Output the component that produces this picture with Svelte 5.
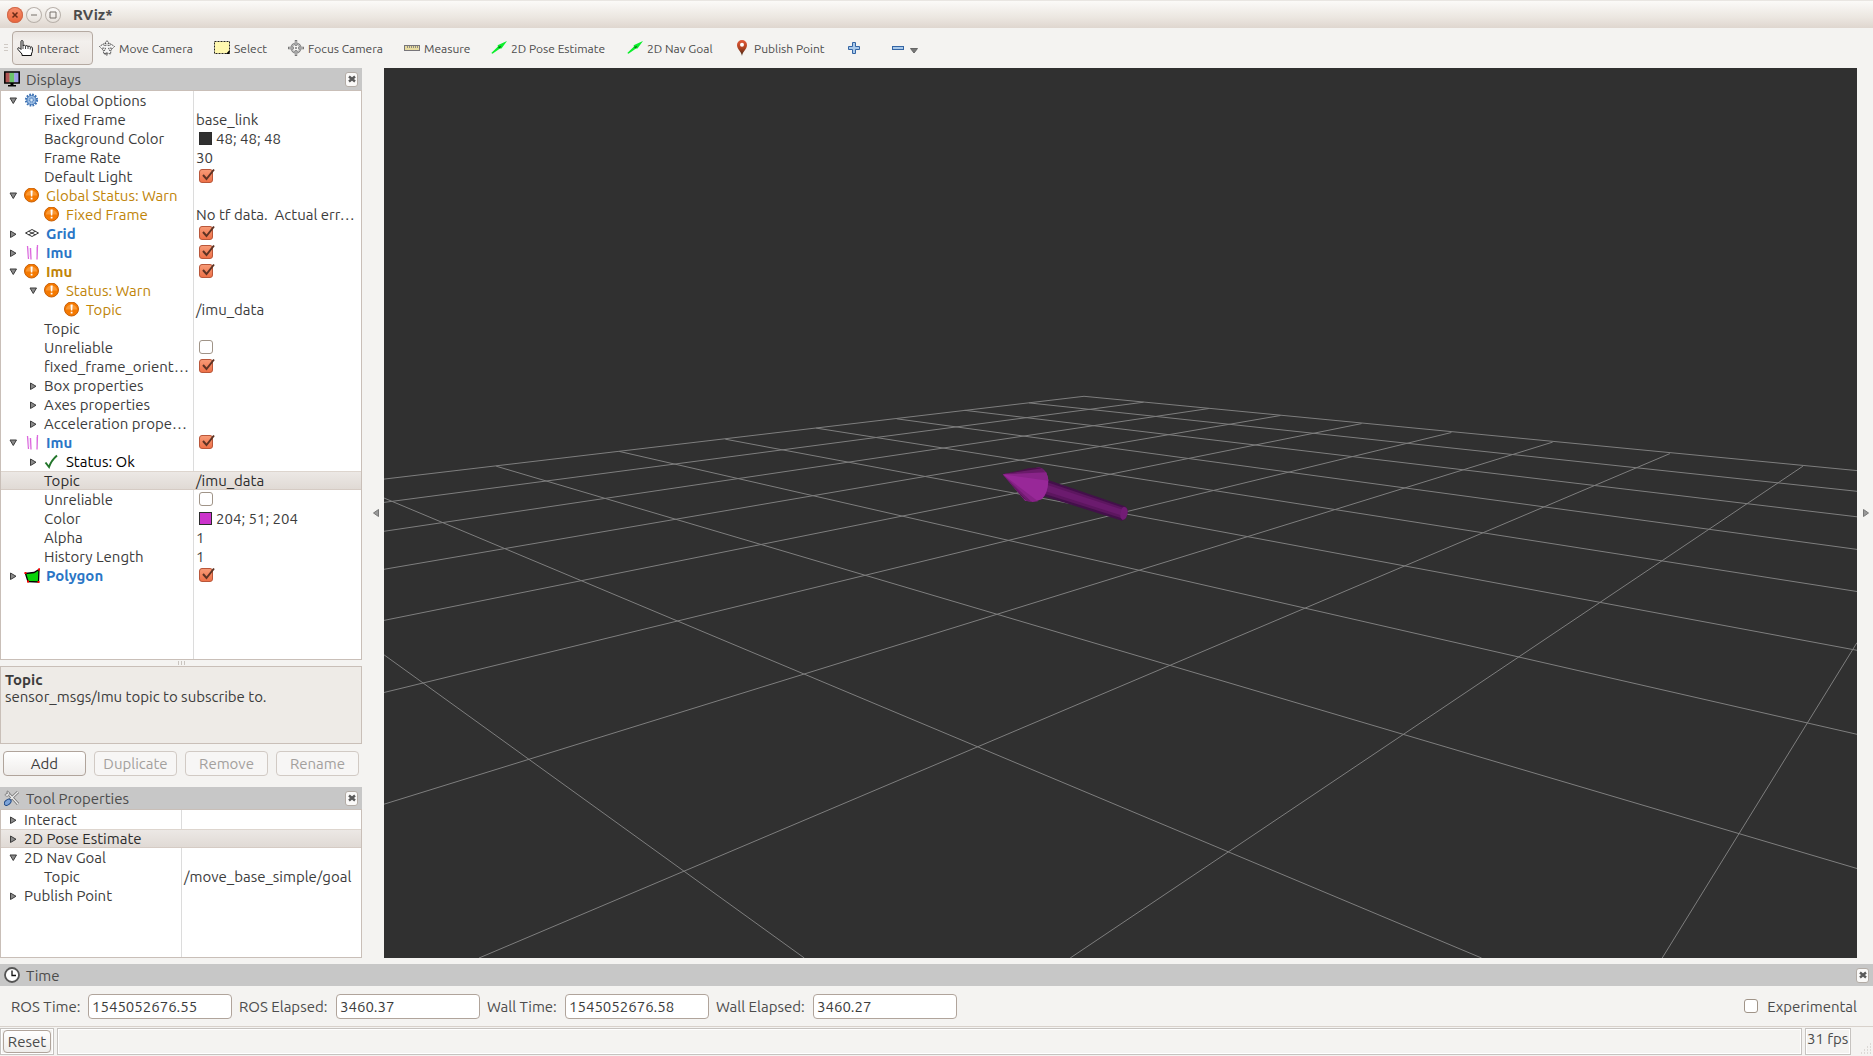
<script lang="ts">
  type Row = {
    name: string;
    level: number;
    open?: boolean;
    icon?: string;
    tone?: string;
    value?: string;
    color?: string;
    check?: boolean;
    selected?: boolean;
  };

  const tools = [
    { label: 'Interact', icon: 'hand' },
    { label: 'Move Camera', icon: 'move' },
    { label: 'Select', icon: 'select' },
    { label: 'Focus Camera', icon: 'focus' },
    { label: 'Measure', icon: 'ruler' },
    { label: '2D Pose Estimate', icon: 'green' },
    { label: '2D Nav Goal', icon: 'green' },
    { label: 'Publish Point', icon: 'pin' },
  ];
  let activeTool = $state('Interact');

  const displays: Row[] = $state([
    { name: 'Global Options', level: 0, open: true, icon: 'gear' },
    { name: 'Fixed Frame', level: 1, value: 'base_link' },
    { name: 'Background Color', level: 1, value: '48; 48; 48', color: '#303030' },
    { name: 'Frame Rate', level: 1, value: '30' },
    { name: 'Default Light', level: 1, check: true },
    { name: 'Global Status: Warn', level: 0, open: true, icon: 'warn', tone: 'warn' },
    { name: 'Fixed Frame', level: 1, icon: 'warn', tone: 'warn', value: 'No tf data.\u00a0 Actual err…' },
    { name: 'Grid', level: 0, open: false, icon: 'grid', tone: 'display', check: true },
    { name: 'Imu', level: 0, open: false, icon: 'imu', tone: 'display', check: true },
    { name: 'Imu', level: 0, open: true, icon: 'warn', tone: 'warn display', check: true },
    { name: 'Status: Warn', level: 1, open: true, icon: 'warn', tone: 'warn' },
    { name: 'Topic', level: 2, icon: 'warn', tone: 'warn', value: '/imu_data' },
    { name: 'Topic', level: 1 },
    { name: 'Unreliable', level: 1, check: false },
    { name: 'fixed_frame_orient…', level: 1, check: true },
    { name: 'Box properties', level: 1, open: false },
    { name: 'Axes properties', level: 1, open: false },
    { name: 'Acceleration prope…', level: 1, open: false },
    { name: 'Imu', level: 0, open: true, icon: 'imu', tone: 'display', check: true },
    { name: 'Status: Ok', level: 1, open: false, icon: 'ok', tone: 'ok' },
    { name: 'Topic', level: 1, value: '/imu_data', selected: true },
    { name: 'Unreliable', level: 1, check: false },
    { name: 'Color', level: 1, value: '204; 51; 204', color: '#cc33cc' },
    { name: 'Alpha', level: 1, value: '1' },
    { name: 'History Length', level: 1, value: '1' },
    { name: 'Polygon', level: 0, open: false, icon: 'polygon', tone: 'display', check: true },
  ]);

  const toolProps: Row[] = $state([
    { name: 'Interact', level: 0, open: false },
    { name: '2D Pose Estimate', level: 0, open: false, selected: true },
    { name: '2D Nav Goal', level: 0, open: true },
    { name: 'Topic', level: 1, value: '/move_base_simple/goal' },
    { name: 'Publish Point', level: 0, open: false },
  ]);

  const times = [
    { id: 'ros-time', label: 'ROS Time:', value: '1545052676.55' },
    { id: 'ros-elapsed', label: 'ROS Elapsed:', value: '3460.37' },
    { id: 'wall-time', label: 'Wall Time:', value: '1545052676.58' },
    { id: 'wall-elapsed', label: 'Wall Elapsed:', value: '3460.27' },
  ];

  // Ground-plane grid after projection: x1, y1, x2, y2
  const gridLines = [
    [700, 328.3, 1473, 402.6], [645, 334.9, 1473, 423.3], [580.5, 342.3, 1473, 448.8],
    [512.6, 350.8, 1473, 481.4], [432.2, 360.1, 1473, 523.5], [341.3, 371.2, 1473, 582.3],
    [235.2, 383.4, 1473, 666.3], [112.2, 398.2, 1473, 800.5], [0, 430, 1097.6, 890],
    [0, 586.8, 420.3, 890],
    [700, 328.3, 0, 411.1], [759.6, 334.2, 0, 434.4], [824.9, 340.5, 0, 463.3],
    [896.5, 347.5, 0, 501.3], [977.6, 355.6, 0, 552.4], [1067.4, 364.5, 0, 624.5],
    [1168.7, 374.1, 0, 736.2], [1285.9, 385.6, 95, 890], [1418.9, 398.2, 686.2, 890],
    [1473, 574.6, 1278.2, 890],
  ];
</script>

{#snippet icon(name: string)}
  <svg class="icon" viewBox="0 0 16 16" width="16" height="16" aria-hidden="true">
    {#if name === 'hand'}
      <path d="M5 15.500v-1.500L1 9.500C.3 8 1.500 7.200 2.500 8L4 9.500V1.500c0-1.300 2-1.300 2 0V6c0-1 2.500-1 2.500.3 0-1 2.500-.9 2.500.5 0-1 2.200-.8 2.400.5.5-.8 2-.4 2 .8v3.400l-1 2.500v1.500z" fill="#fff" stroke="#111" stroke-width="1" />
      <path d="M6 6v3M8.500 6.500V9M11 7v2M13.300 7.500v2" stroke="#111" stroke-width=".8" />
    {:else if name === 'move'}
      <path d="M8 .7 10.500 3.500H9v2.200l2.500-.7V3.800L15.500 6.500l-3 3V8L9.500 8.300 11 11l1-.7-.5 3.700-3.500-1V15.500L5.500 13.500 8 13 5 14l-.8-3.500 1.100.5 1.300-2.700L3.500 8v1.500L.5 6.500l4-2.700V5L7 5.700V3.500H5.500z" fill="#f4f4f4" stroke="#444" stroke-width=".9" stroke-dasharray="1.600 .6" />
    {:else if name === 'select'}
      <rect x=".5" y="1.500" width="15" height="12" fill="#fff8b0" stroke="#222" stroke-dasharray="2 1" />
      <path d="M15.500 10v4H12z" fill="#000" />
    {:else if name === 'focus'}
      <circle cx="8" cy="8" r="4.500" fill="none" stroke="#777" stroke-width="2" />
      <circle cx="8" cy="8" r="4.500" fill="none" stroke="#ddd" stroke-width=".7" />
      <path d="M8 0v6M8 10v6M0 8h6M10 8h6" stroke="#777" stroke-width="2.400" />
      <path d="M8 1v4.500M8 10.500V15M1 8h4.500M10.500 8H15" stroke="#eee" stroke-width=".8" />
      <circle cx="8" cy="8" r="1" fill="#777" />
    {:else if name === 'ruler'}
      <rect x=".5" y="5.500" width="15" height="5" fill="#e8dca0" stroke="#77757a" />
      <path d="M3.500 6v2M5.500 6v2M7.500 6v2M9.500 6v2M11.500 6v2M13.500 6v2" stroke="#777" stroke-width=".8" />
    {:else if name === 'green'}
      <path d="M.3 13 7 6.500l-.4-1.300L16 1 10.500 8.600 9 8.400 1.500 13.800z" fill="#0bef2c" />
      <path d="m6.500 7 3.800-1.200L9 8.600z" fill="#067a16" />
    {:else if name === 'pin'}
      <defs><linearGradient id="pin" x1="0" y1="0" x2="0" y2="1"><stop offset="0" stop-color="#e45a3a" /><stop offset=".5" stop-color="#b04322" /><stop offset="1" stop-color="#3b2412" /></linearGradient></defs>
      <path d="M8 16C7.500 11.500 3 9.500 3 5a5 5 0 0 1 10 0c0 4.500-4.500 6.500-5 11z" fill="url(#pin)" />
      <circle cx="8" cy="4.800" r="2" fill="#fff" />
    {:else if name === 'plus'}
      <path d="M6.500 2.500h3v4h4v3h-4v4h-3v-4h-4v-3h4z" fill="#a9c9ea" stroke="#3465a4" />
    {:else if name === 'minus'}
      <rect x="2.500" y="6.500" width="11" height="3" fill="#a9c9ea" stroke="#3465a4" />
    {:else if name === 'monitor'}
      <path d="M1 1.500h4.700v10H1z" fill="#b05555" /><path d="M5.700 1.500h4.600v10H5.700z" fill="#6cc46c" /><path d="M10.300 1.500H15v10h-4.700z" fill="#9c9ce8" />
      <rect x=".8" y="1" width="14.400" height="11" fill="none" stroke="#000" stroke-width="1.500" />
      <path d="M6.500 12h3v2h2.500v1.500H4V14h2.500z" fill="#000" />
    {:else if name === 'wrench'}
      <path d="m3 2 11 12M14 2 5 10.500" stroke="#777" stroke-width="3" />
      <path d="m3 2 11 12M14 2 5 10.500" stroke="#eee" stroke-width="1.200" />
      <path d="M1 4.500c0 2 3 2.500 4 .5S4.500.800 3 1l.5 2.500z" fill="#eee" stroke="#777" stroke-width=".8" />
      <ellipse cx="3.700" cy="12.300" rx="3.800" ry="2.500" transform="rotate(-40 3.700 12.300)" fill="#7da4d8" stroke="#204a87" />
    {:else if name === 'clock'}
      <circle cx="8" cy="8" r="7" fill="#fff" stroke="#555" stroke-width="1.800" />
      <path d="M8 3.500V8.500h4" fill="none" stroke="#111" stroke-width="1.300" />
    {:else if name === 'gear'}
      <circle cx="7.500" cy="7" r="5.600" fill="none" stroke="#3d72b4" stroke-width="2" stroke-dasharray="1.700 1.230" />
      <circle cx="7.500" cy="7" r="4.600" fill="#9fc0e6" stroke="#3d72b4" />
      <circle cx="7.500" cy="7" r="2.200" fill="none" stroke="#3d72b4" stroke-dasharray="1 .7" />
      <circle cx="7.500" cy="7" r=".8" fill="#fff" />
    {:else if name === 'warn'}
      <circle cx="7.500" cy="7" r="7" fill="#f57900" stroke="#c75f06" />
      <path d="M1.800 7.500a5.800 5.800 0 0 1 11.400 0z" fill="#fcaf5a" opacity=".6" />
      <path d="M6.500 2.500h2.200l-.4 6H6.900zM6.700 9.700h1.800v1.800H6.700z" fill="#fff" />
    {:else if name === 'grid'}
      <path d="M1.500 7 8 3.500 14.500 7 8 10.500zM4.700 5.300l6.600 3.500M11.300 5.300 4.700 8.800" fill="none" stroke="#333" />
    {:else if name === 'imu'}
      <path d="M3.500 1 4.500 14M6.500 3 7 14.500M13.500 0 13 14.500" stroke="#dd66dd" stroke-width="1.300" fill="none" />
      <path d="M5 3v9M12.500 2v10" stroke="#e3b4ee" stroke-width=".7" />
    {:else if name === 'ok'}
      <path d="M1.500 8.500 5 13C6.500 8.500 9 5 13 1.500" fill="none" stroke="#23762b" stroke-width="2" />
    {:else if name === 'polygon'}
      <path d="M1.500 5.500 10 4.500l5-3L14.500 14 4 13.500z" fill="#08d408" stroke="#000" stroke-width="1.300" />
      <path d="M.5 4h2v2h-2zM14 .500h2v2h-2zM3 12.500h2v2H3zM13.500 13h2v2h-2z" fill="#f00" />
    {/if}
  </svg>
{/snippet}

{#snippet closeButton(label: string)}
  <button class="close" aria-label={label}>
    <svg viewBox="0 0 8 8" width="8" height="8"><path d="m1 1.500 6 5M7 1.500l-6 5" stroke="#5a5a5a" stroke-width="2.400" /></svg>
  </button>
{/snippet}

{#snippet tree(rows: Row[], label: string)}
  <table aria-label={label}>
    <colgroup><col class="namecol" /><col /></colgroup>
    <tbody>
      {#each rows as row, i}
        <tr class:selected={row.selected}>
          <td>
            <div class="name level{row.level} {row.tone ?? ''}">
              {#if row.open !== undefined}
                <button class="toggle" aria-label="{row.open ? 'Collapse' : 'Expand'} {row.name}" onclick={() => (row.open = !row.open)}>
                  <svg viewBox="0 0 8 8" width="8" height="8">
                    {#if row.open}<path d="M1 1h6.500L4.250 6.500z" />{:else}<path d="M1.500 1v6.500L7 4.250z" />{/if}
                  </svg>
                </button>
              {:else}
                <span class="toggle"></span>
              {/if}
              {#if row.icon}{@render icon(row.icon)}{/if}
              <span class="text">{row.name}</span>
            </div>
          </td>
          <td>
            <div class="value">
              {#if row.check !== undefined}
                <span class="check">
                  <input type="checkbox" aria-label={row.name} bind:checked={rows[i].check} />
                  <svg viewBox="0 0 17 15" width="17" height="15" aria-hidden="true"><path d="m4 7 3.500 4L15 1.500" /></svg>
                </span>
              {/if}
              {#if row.color}<span class="swatch" style:background={row.color}></span>{/if}
              {#if row.value}<span class="text">{row.value}</span>{/if}
            </div>
          </td>
        </tr>
      {/each}
    </tbody>
  </table>
{/snippet}

<div class="window">
  <header class="titlebar">
    <button class="win red" aria-label="Close window"><svg viewBox="0 0 16 16" width="16" height="16"><path d="m5.500 5.500 5 5M10.500 5.500l-5 5" /></svg></button>
    <button class="win" aria-label="Minimize window"><svg viewBox="0 0 16 16" width="16" height="16"><path d="M5 8h6" /></svg></button>
    <button class="win" aria-label="Maximize window"><svg viewBox="0 0 16 16" width="16" height="16"><path d="M5 5h6v6H5z" /></svg></button>
    <h1>RViz*</h1>
  </header>

  <nav class="toolbar" aria-label="Tools">
    <span class="handle"></span>
    {#each tools as tool}
      <button class="tool" class:active={activeTool === tool.label} onclick={() => (activeTool = tool.label)}>
        {@render icon(tool.icon)}<span>{tool.label}</span>
      </button>
    {/each}
    <button class="tool" aria-label="Add tool">{@render icon('plus')}</button>
    <button class="tool" aria-label="Remove tool">
      {@render icon('minus')}
      <svg class="drop" viewBox="0 0 8 6" width="8" height="6"><path d="M.5.500h7L4 5z" fill="#777" stroke="#666" /></svg>
    </button>
  </nav>

  <main>
    <aside>
      <section class="dock displays">
        <h2>{@render icon('monitor')}<span>Displays</span>{@render closeButton('Close Displays')}</h2>
        <div class="tree wide">{@render tree(displays, 'Displays')}</div>
        <div class="splitter"><i></i><i></i><i></i></div>
        <div class="help"><strong>Topic</strong><p>sensor_msgs/Imu topic to subscribe to.</p></div>
        <div class="actions">
          <button>Add</button>
          <button disabled>Duplicate</button>
          <button disabled>Remove</button>
          <button disabled>Rename</button>
        </div>
      </section>
      <section class="dock props">
        <h2>{@render icon('wrench')}<span>Tool Properties</span>{@render closeButton('Close Tool Properties')}</h2>
        <div class="tree narrow">{@render tree(toolProps, 'Tool Properties')}</div>
      </section>
    </aside>

    <button class="collapse left" aria-label="Hide left dock"><svg viewBox="0 0 6 8" width="6" height="8"><path d="M5.500.500v7L.5 4z" /></svg></button>

    <div class="view">
      <svg viewBox="0 0 1473 890" preserveAspectRatio="xMidYMid slice" role="img" aria-label="3D view">
        <g stroke="#7e7e7e" stroke-width="1">
          {#each gridLines as [x1, y1, x2, y2]}<line {x1} {y1} {x2} {y2} />{/each}
        </g>
        <g transform="translate(576 372) scale(.3333)">
          <path d="M262 119 490 197Q503 200 503 217 500 240 486 242L250 168z" fill="#43104a" />
          <path d="M262 127 490 203 502 216 490 236 252 161z" fill="#5c165f" />
          <path d="M262 135 490 210 490 228 255 153z" fill="#6b1b6e" />
          <path d="M492 200Q504 202 503 217 501 239 488 240 478 236 482 218 484 202 492 200z" fill="#721c75" />
          <path d="M128 103 238 82Q262 90 265 122 264 160 245 178 225 188 195 182z" fill="#982898" />
          <path d="M128 103 205 85 240 82 252 90z" fill="#491149" />
          <path d="M128 103 246 85 261 102z" fill="#6a1b6a" />
          <path d="M128 103 259 97 266 122z" fill="#892489" />
          <path d="M128 103 234 184 216 186z" fill="#872287" />
          <path d="M128 103 216 186 202 183z" fill="#701b70" />
          <path d="M128 103 204 185 190 175z" fill="#511351" />
        </g>
      </svg>
    </div>

    <button class="collapse right" aria-label="Show right dock"><svg viewBox="0 0 6 8" width="6" height="8"><path d="M.5.500v7L5.500 4z" /></svg></button>
  </main>

  <section class="dock time">
    <h2>{@render icon('clock')}<span>Time</span>{@render closeButton('Close Time')}</h2>
    <form onsubmit={(e) => e.preventDefault()}>
      <div class="fields">
        {#each times as t}
          <label for={t.id}>{t.label}</label>
          <input id={t.id} type="text" value={t.value} />
        {/each}
      </div>
      <label class="experimental"><input type="checkbox" />Experimental</label>
    </form>
  </section>

  <footer>
    <div class="frame reset"><button>Reset</button></div>
    <div class="frame message"></div>
    <div class="frame fps">31 fps</div>
    <svg class="grip" viewBox="0 0 12 12" width="12" height="12" aria-hidden="true">
      <path d="M10 1h1M7 4h1M10 4h1M4 7h1M7 7h1M10 7h1M1 10h1M4 10h1M7 10h1M10 10h1" stroke="#c4bfba" stroke-width="1" />
    </svg>
  </footer>
</div>

<style>
  :global(body) {
    margin: 0;
    background: #f4f3f1;
  }
  .window {
    display: flex;
    flex-direction: column;
    min-height: 100vh;
    background: #f4f3f1;
    color: #4c4c4c;
    font-family: Ubuntu, "Noto Sans", "Open Sans", sans-serif;
    font-size: 15px;
    line-height: 19px;
  }
  button, input {
    font: inherit;
    color: inherit;
    box-sizing: border-box;
  }
  button {
    margin: 0;
    padding: 0;
    border: 0;
    background: none;
  }
  svg {
    display: block;
    flex: none;
  }

  .titlebar {
    display: flex;
    align-items: center;
    gap: 3px;
    height: 28px;
    padding-left: 7px;
    box-sizing: border-box;
    border-top: 1px solid #e9e6e2;
    background: linear-gradient(#fbfaf8, #ece7e1 60%, #dfd6cf);
  }
  .win {
    display: grid;
    place-items: center;
    width: 16px;
    height: 16px;
    border-radius: 50%;
    background: linear-gradient(#fdfcfb, #e6e0da);
    box-shadow: 0 0 0 1px #b8b1aa inset;
  }
  .win path {
    fill: none;
    stroke: #77716b;
  }
  .red {
    background: linear-gradient(#f79070, #ea6238);
    box-shadow: 0 0 0 1px #cf694a inset;
  }
  .red path {
    stroke: #6b2b17;
    stroke-width: 1.500;
  }
  h1 {
    margin: 0 0 0 9px;
    font-size: 15px;
    line-height: 19px;
  }

  .toolbar {
    display: grid;
    grid-template-columns: 12px 82px 115px 74px 116px 87px 136px 107px 112px 44px 40px;
    align-items: center;
    height: 40px;
    font-size: 12px;
  }
  .handle {
    width: 4px;
    height: 8px;
    margin-left: 4px;
    background: repeating-linear-gradient(#cfcac5 0 1px, transparent 1px 3px);
  }
  .tool {
    display: flex;
    align-items: center;
    gap: 4px;
    height: 34px;
    margin-right: 1px;
    padding: 0 4px;
    border: 1px solid transparent;
    border-radius: 4px;
    white-space: nowrap;
  }
  .tool.active {
    border-color: #b5aaa2;
    background: linear-gradient(#e9e4e0, #f3f0ed 30%, #ebe6e2);
  }
  .drop {
    margin-top: 5px;
  }

  main {
    display: flex;
    flex: 1;
  }
  aside {
    display: flex;
    flex-direction: column;
    width: 362px;
    flex: none;
  }
  .dock {
    display: flex;
    flex-direction: column;
  }
  .displays {
    flex: 1;
  }
  h2 {
    display: flex;
    align-items: center;
    gap: 6px;
    margin: 0;
    height: 22px;
    padding: 0 4px;
    background: #c7c7c7;
    font-size: 15px;
    font-weight: 400;
  }
  h2 span {
    flex: 1;
  }
  .close {
    display: grid;
    place-items: center;
    width: 13px;
    height: 15px;
    border: 1px solid #b3aca6;
    border-radius: 3px;
    background: #faf9f8;
  }
  .tree {
    border: 1px solid #c9bfb8;
    color: #3c3c3c;
  }
  .wide {
    flex: 1;
    background: linear-gradient(90deg, #fff 192px, #dcdcdc 192px 193px, #fff 193px);
  }
  .narrow {
    height: 147px;
    background: linear-gradient(90deg, #fff 180px, #dcdcdc 180px 181px, #fff 181px);
  }
  table {
    width: 100%;
    table-layout: fixed;
    border-collapse: collapse;
  }
  .wide .namecol {
    width: 193px;
  }
  .narrow .namecol {
    width: 181px;
  }
  td {
    height: 19px;
    padding: 0;
  }
  .selected {
    background: linear-gradient(#ddd5ce 1px, #ece8e5 1px, #e0dad5 18px, #d5cbc4 18px);
    color: #2c2c2c;
  }
  .name, .value {
    display: flex;
    align-items: center;
    height: 19px;
  }
  .value {
    padding-left: 2px;
  }
  .text {
    white-space: nowrap;
  }
  .toggle {
    display: flex;
    align-items: center;
    flex: none;
    width: 15px;
    height: 19px;
    margin-left: 8px;
  }
  .toggle path {
    fill: #8a8a8a;
    stroke: #3c3c3c;
  }
  .level1 {
    padding-left: 20px;
  }
  .level2 {
    padding-left: 40px;
  }
  .name .icon {
    margin-right: 6px;
  }
  .warn {
    color: #c08408;
  }
  .display {
    font-weight: 700;
  }
  .display:not(.warn) {
    color: #2a76c6;
  }
  .ok {
    color: #000;
  }
  .check {
    display: grid;
    align-items: center;
    margin-left: 3px;
    padding-bottom: 2px;
  }
  .check > * {
    grid-area: 1 / 1;
  }
  input[type="checkbox"] {
    appearance: none;
    width: 14px;
    height: 14px;
    margin: 0;
    border: 1px solid #a09488;
    border-radius: 3px;
    background: #fff;
  }
  .check input:checked {
    border-color: #b9573a;
    background: linear-gradient(#f79a76, #ee7148);
  }
  .check svg {
    display: none;
    pointer-events: none;
  }
  .check input:checked + svg {
    display: block;
  }
  .check path {
    fill: none;
    stroke: #5e3324;
    stroke-width: 2;
  }
  .swatch {
    width: 13px;
    height: 13px;
    margin: 0 4px 0 3px;
    box-sizing: border-box;
    border: 1px solid #2c2c2c;
  }

  .splitter {
    display: flex;
    justify-content: center;
    align-items: center;
    gap: 2px;
    height: 6px;
  }
  .splitter i {
    width: 1px;
    height: 4px;
    background: #c9c4bf;
  }
  .help {
    height: 78px;
    padding: 4px;
    box-sizing: border-box;
    border: 1px solid #c9bfb8;
    background: #eeebe7;
    color: #3c3c3c;
    line-height: 17px;
  }
  .help strong {
    display: block;
  }
  .help p {
    margin: 0;
  }
  .actions {
    display: grid;
    grid-template-columns: repeat(4, 1fr);
    gap: 8px;
    padding: 7px 3px 11px;
  }
  .actions button, .reset button {
    height: 25px;
    border: 1px solid #b0a49b;
    border-radius: 4px;
    background: linear-gradient(#fff, #efedeb);
  }
  .actions button {
    color: #3c3c3c;
  }
  .actions button:disabled {
    border-color: #d1cac4;
    background: #f7f6f5;
    color: #a3a09d;
  }

  .collapse {
    display: grid;
    place-items: center;
    width: 22px;
    flex: none;
  }
  .collapse.left {
    padding-left: 6px;
  }
  .collapse.right {
    width: 16px;
    padding-left: 2px;
  }
  .collapse path {
    fill: #999;
    stroke: #777;
  }
  .view {
    display: grid;
    flex: 1;
    min-width: 0;
    background: #303030;
  }
  .view svg {
    width: 100%;
    height: 100%;
    min-height: 0;
  }

  .time {
    margin-top: 6px;
  }
  form {
    display: flex;
    align-items: center;
    justify-content: space-between;
    height: 40px;
    padding: 0 16px 0 11px;
    box-sizing: border-box;
  }
  .fields {
    display: grid;
    grid-template-columns: 77px 151px 97px 151px 78px 151px 97px 151px;
    align-items: center;
    white-space: nowrap;
  }
  input[type="text"] {
    width: 144px;
    height: 25px;
    padding: 0 3px;
    border: 1px solid #b0a49b;
    border-radius: 4px;
    background: #fff;
    color: #3c3c3c;
  }
  .experimental {
    display: flex;
    align-items: center;
    gap: 9px;
  }
  footer {
    display: flex;
    gap: 3px;
    height: 30px;
    padding: 1px 1px 1px 0;
    box-sizing: border-box;
    border-top: 1px solid #d8d1cb;
  }
  .frame {
    box-sizing: border-box;
    border: 1px solid #c6c3c0;
    box-shadow: 0 0 0 1px #fff inset;
  }
  .reset {
    width: 54px;
    padding: 1px 2px;
  }
  .reset button {
    width: 48px;
    height: 23px;
  }
  .message {
    flex: 1;
  }
  .fps {
    width: 46px;
    padding-left: 1px;
    white-space: nowrap;
  }
  .grip {
    align-self: end;
    margin-left: 6px;
  }
</style>
